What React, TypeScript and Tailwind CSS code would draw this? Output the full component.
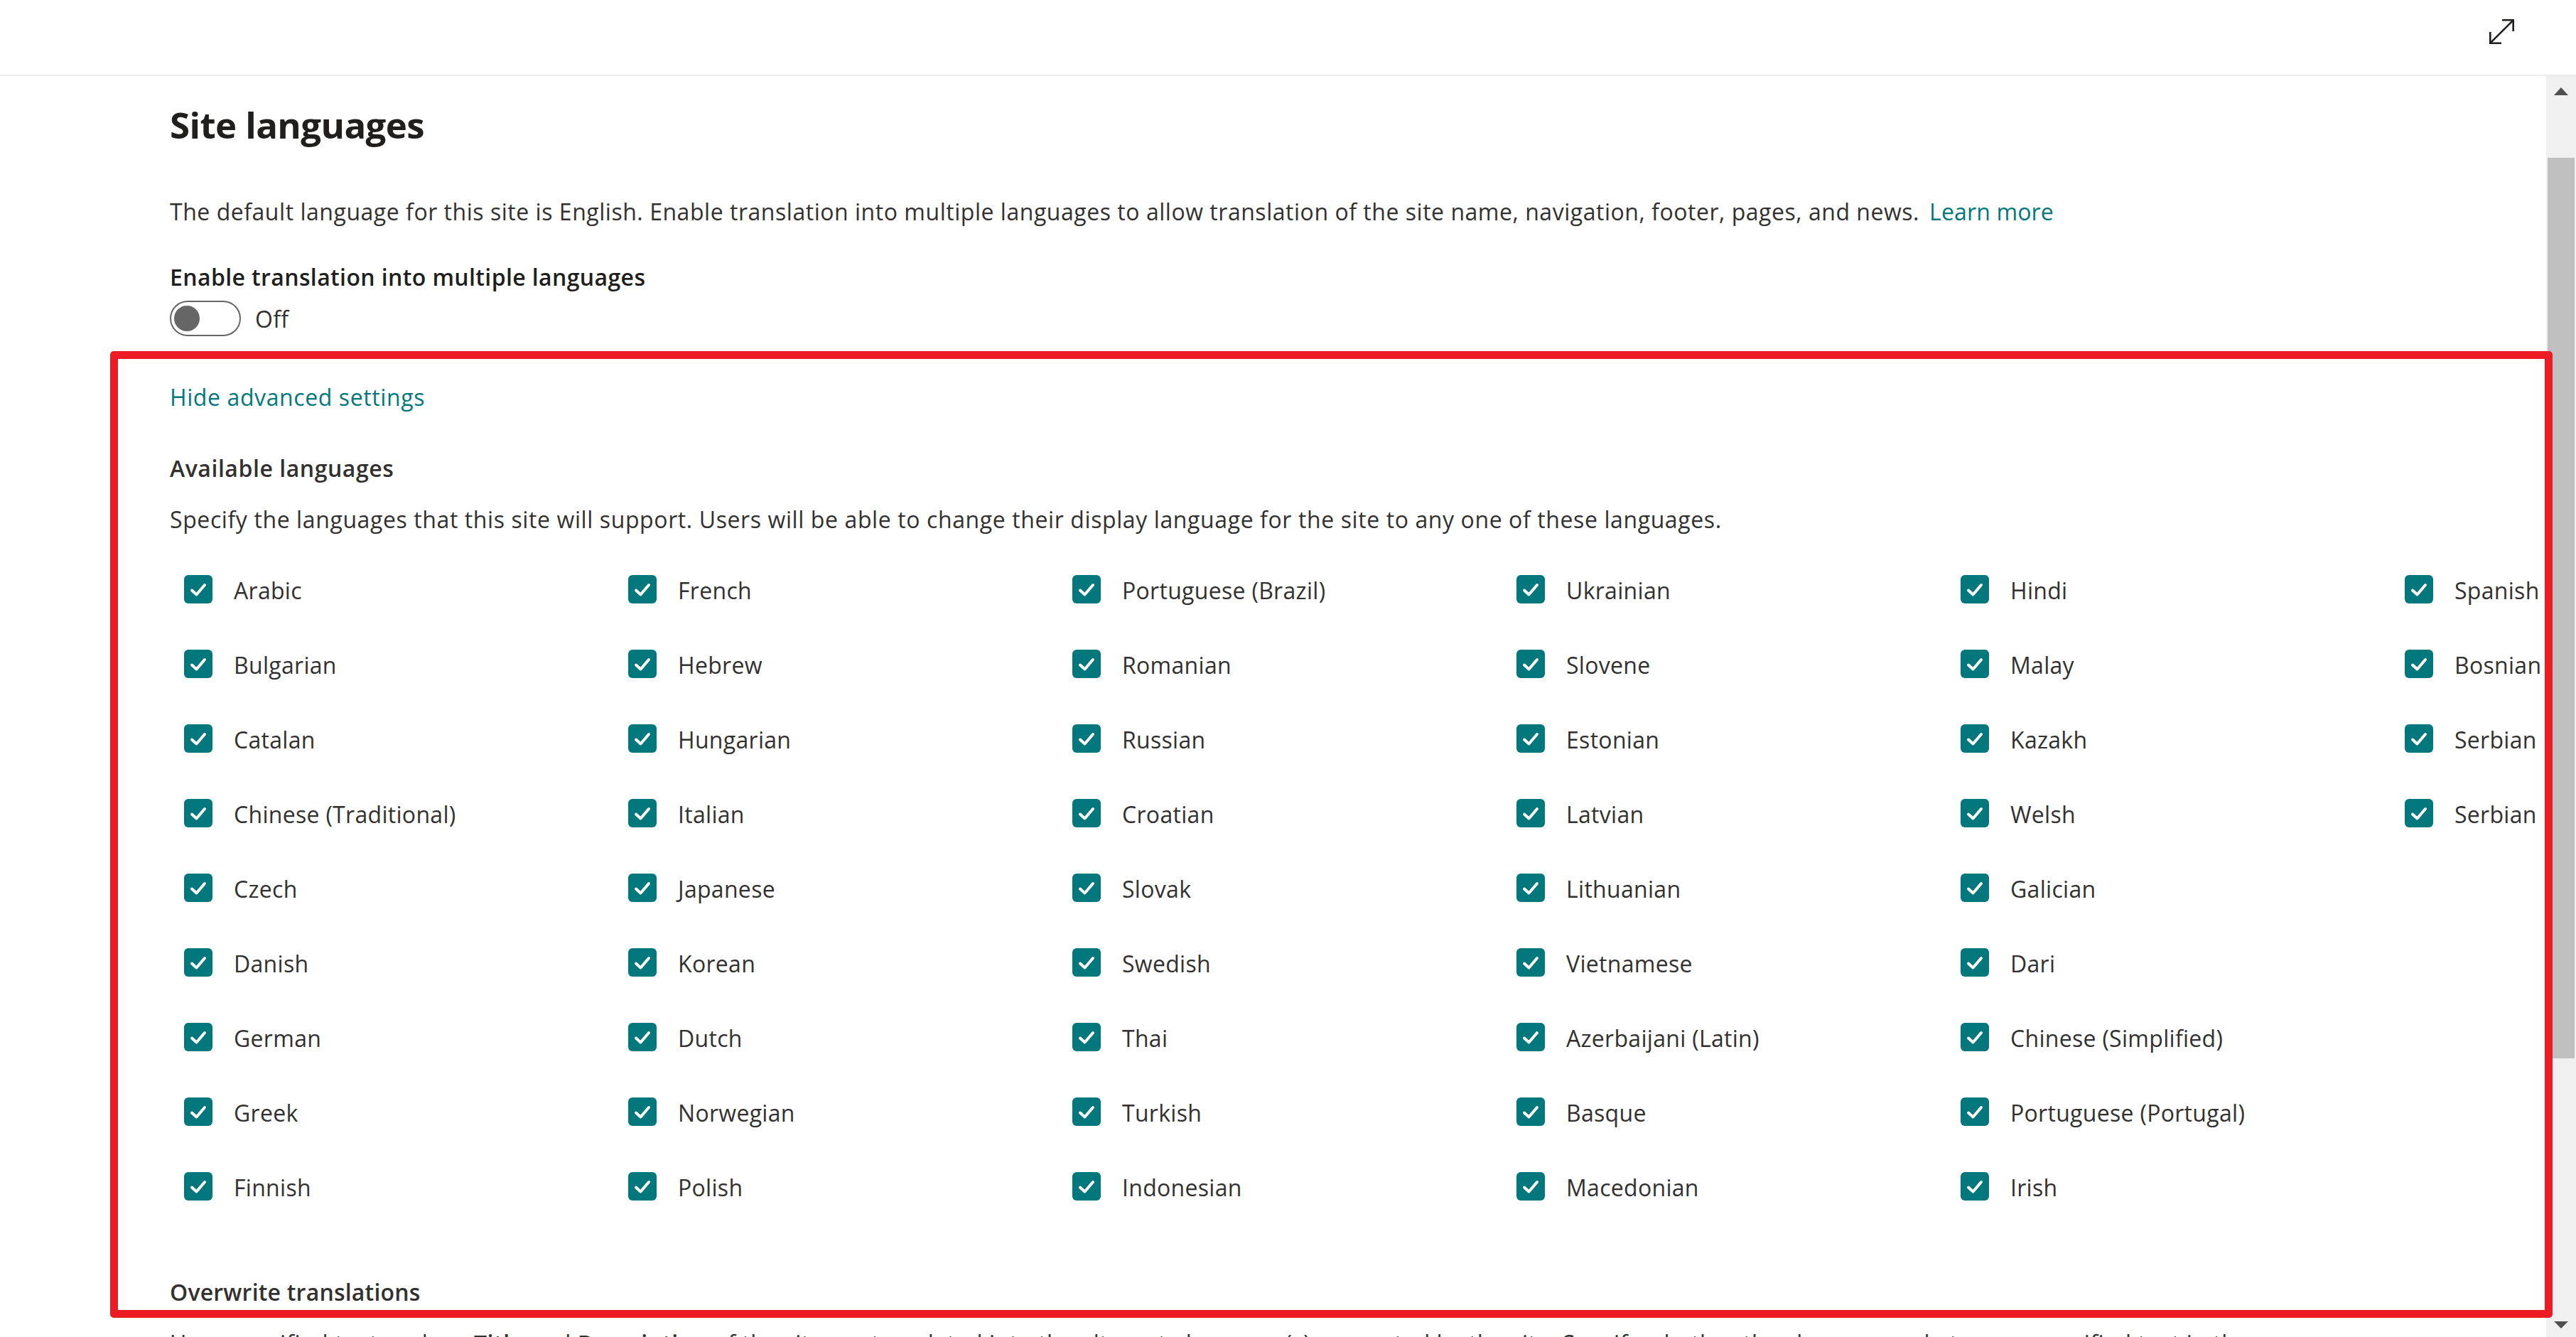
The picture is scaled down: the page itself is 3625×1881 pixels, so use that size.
const languages = [
  'Arabic', 'Bulgarian', 'Catalan', 'Chinese (Traditional)', 'Czech', 'Danish', 'German', 'Greek', 'Finnish',
  'French', 'Hebrew', 'Hungarian', 'Italian', 'Japanese', 'Korean', 'Dutch', 'Norwegian', 'Polish',
  'Portuguese (Brazil)', 'Romanian', 'Russian', 'Croatian', 'Slovak', 'Swedish', 'Thai', 'Turkish', 'Indonesian',
  'Ukrainian', 'Slovene', 'Estonian', 'Latvian', 'Lithuanian', 'Vietnamese', 'Azerbaijani (Latin)', 'Basque', 'Macedonian',
  'Hindi', 'Malay', 'Kazakh', 'Welsh', 'Galician', 'Dari', 'Chinese (Simplified)', 'Portuguese (Portugal)', 'Irish',
  'Spanish', 'Bosnian', 'Serbian', 'Serbian',
]

function Check() {
  return (
    <span className="flex h-[40px] w-[40px] shrink-0 items-center justify-center rounded-[6px] bg-[#03787c]">
      <svg width="40" height="40" viewBox="0 0 40 40" fill="none">
        <path d="M11 21.5 L17.5 27.5 L29 14" stroke="#fff" strokeWidth="4" strokeLinecap="round" strokeLinejoin="round" />
      </svg>
    </span>
  )
}

export default function App() {
  return (
    <div className="relative h-[1881px] w-[3625px] overflow-hidden bg-white font-['Open_Sans',sans-serif] text-[32px] text-[#323130]">
      {/* top bar */}
      <div className="flex h-[107px] justify-end border-b-2 border-[#ededed] pr-[87px] pt-[27px]">
        <svg width="35" height="35" viewBox="0 0 35 35" fill="none" stroke="#201f1e" strokeWidth="2.6">
          <path d="M18 1.3H33.7V17" />
          <path d="M33.7 1.3L1.3 33.7" />
          <path d="M1.3 18V33.7H17" />
        </svg>
      </div>

      <div className="flex h-[1774px]">
        <div className="min-w-0 flex-1 overflow-hidden pl-[239px]">
          <h1 className="mt-[38px] h-[60px] text-[51px] font-bold leading-[60px] tracking-[-0.6px] text-[#201f1e]">Site languages</h1>

          <p className="mt-[71px] flex h-[44px] items-center gap-[14px] leading-[44px]">
            <span className="tracking-[0.53px]">The default language for this site is English. Enable translation into multiple languages to allow translation of the site name, navigation, footer, pages, and news.</span>
            <a className="tracking-[0.15px] text-[#03787c]">Learn more</a>
          </p>

          <div className="mt-[48px] h-[44px] font-semibold leading-[44px] tracking-[0.38px] text-[#201f1e]">Enable translation into multiple languages</div>

          <div className="mt-[11px] flex h-[50px] items-center gap-[20px]">
            <span className="flex h-[50px] w-[100px] items-center rounded-full border-2 border-[#666666] pl-[4px]">
              <span className="h-[36px] w-[36px] rounded-full bg-[#666666]" />
            </span>
            <span className="pt-[2px] leading-[44px] tracking-[0.3px]">Off</span>
          </div>

          <a className="mt-[64px] block h-[44px] leading-[44px] tracking-[0.6px] text-[#03787c]">Hide advanced settings</a>

          <div className="mt-[56px] h-[44px] font-semibold leading-[44px] tracking-[0.54px]">Available languages</div>
          <p className="mt-[28px] h-[44px] leading-[44px] tracking-[0.6px]">Specify the languages that this site will support. Users will be able to change their display language for the site to any one of these languages.</p>

          <div className="ml-[20px] mt-[56px] grid grid-flow-col grid-cols-[repeat(6,625px)] grid-rows-[repeat(9,105px)]">
            {languages.map((name, i) => (
              <label key={i} className="flex items-start gap-[30px]">
                <Check />
                <span className="h-[44px] whitespace-nowrap leading-[44px] tracking-[0.3px]">{name}</span>
              </label>
            ))}
          </div>

          <div className="mt-[42px] h-[44px] font-semibold leading-[44px] tracking-[0.2px]">Overwrite translations</div>
          <p className="mt-[28px] h-[44px] whitespace-nowrap leading-[44px] tracking-[0.5px]">
            <span className="tracking-[0.78px]">User-specified text such as </span><b className="font-semibold">Title</b> and <b className="font-semibold">Description</b> of the site are translated into the alternate language(s) supported by the site. Specify whether the changes made to user-specified text in the
          </p>
        </div>

        {/* scrollbar */}
        <div className="flex h-full w-[42px] shrink-0 flex-col items-center bg-[#f0f0f0]">
          <svg className="mt-[16px]" width="20" height="11" viewBox="0 0 20 11"><path d="M10 0L20 11H0Z" fill="#505050" /></svg>
          <div className="mt-[88px] h-[1267px] w-[38px] bg-[#c0c0c0]" />
          <svg className="mt-[370px]" width="20" height="10" viewBox="0 0 20 10"><path d="M0 0H20L10 10Z" fill="#505050" /></svg>
        </div>
      </div>

      {/* red annotation frame */}
      <div className="absolute left-[155px] top-[494px] h-[1360px] w-[3437px] rounded-[5px] border-[11px] border-[#ed1c24]" />
    </div>
  )
}
